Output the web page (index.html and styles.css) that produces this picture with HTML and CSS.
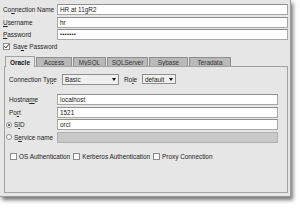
FILE: index.html
```html
<!DOCTYPE html>
<html>
<head>
<meta charset="utf-8">
<link rel="stylesheet" href="styles.css">
</head>
<body>
<div class="dialog">
  <div class="form">
    <label class="lbl"><span>Co<u>n</u>nection Name</span></label><div class="input">HR at 11gR2</div>
    <label class="lbl"><span><u>U</u>sername</span></label><div class="input">hr</div>
    <label class="lbl"><span><u>P</u>assword</span></label><div class="input dots">•••••••</div>
  </div>
  <div class="save">
    <span class="cb checked"><svg viewBox="0 0 7 7" width="7" height="7"><polyline points="1.3,3.4 2.8,5 5.8,1.4" fill="none" stroke="#333" stroke-width="1"/></svg></span>
    <span>Sa<u>v</u>e Password</span>
  </div>
  <div class="tabs">
    <div class="tab sel" style="width:30px">Oracle</div>
    <div class="tab" style="width:36px">Access</div>
    <div class="tab" style="width:33px">MySQL</div>
    <div class="tab" style="width:41px">SQLServer</div>
    <div class="tab" style="width:39px">Sybase</div>
    <div class="tab" style="width:42px">Teradata</div>
  </div>
  <div class="panel">
    <div class="typerow">
      <span class="lbl ct"><span>Connection Ty<u>p</u>e</span></span>
      <div class="select basic"><span>Basic</span><i class="arrow"></i></div>
      <span class="lbl role"><span>Ro<u>l</u>e</span></span>
      <div class="select roles"><span>default</span><i class="arrow"></i></div>
    </div>
    <div class="grid">
      <label class="lbl ind"><span>Hostna<u>m</u>e</span></label><div class="input">localhost</div>
      <label class="lbl ind"><span>Po<u>r</u>t</span></label><div class="input">1521</div>
      <label class="lbl rad"><span class="radio on"></span><span>S<u>I</u>D</span></label><div class="input">orcl</div>
      <label class="lbl rad"><span class="radio"></span><span>S<u>e</u>rvice name</span></label><div class="input disabled"></div>
    </div>
    <div class="auth">
      <span class="opt"><span class="cb"></span><span>OS Authentication</span></span>
      <span class="opt"><span class="cb"></span><span>Kerberos Authentication</span></span>
      <span class="opt"><span class="cb"></span><span>Proxy Connection</span></span>
    </div>
  </div>
</div>
</body>
</html>
```

FILE: styles.css
```css
html, body {
  margin: 0;
  padding: 0;
  background: #ffffff;
}
body {
  width: 300px;
  height: 212px;
  overflow: hidden;
  font-family: "Liberation Sans", Arial, sans-serif;
  font-size: 6.4px;
  color: #222;
}
u { text-decoration: underline; text-underline-offset: 0.5px; }
.dialog {
  box-sizing: border-box;
  width: 291px;
  height: 197px;
  background: #e6e6e6;
  border-right: 1px solid #9a9a9a;
  border-bottom: 1px solid #9a9a9a;
  box-shadow: 2px 3px 4px rgba(0,0,0,0.55);
  padding: 4px 2px 0 3px;
  display: flex;
  flex-direction: column;
}
.form {
  display: grid;
  grid-template-columns: 54px 231px;
  grid-auto-rows: 11px;
  row-gap: 1.5px;
  align-items: center;
}
.lbl {
  display: flex;
  align-items: center;
  white-space: nowrap;
  height: 11px;
}
.input {
  box-sizing: border-box;
  height: 11px;
  background: #fff;
  border: 1px solid #a7a7a7;
  border-top-color: #8f8f8f;
  padding: 0 2px;
  line-height: 9px;
  white-space: nowrap;
  overflow: hidden;
}
.input.dots { font-size: 6px; letter-spacing: 0.2px; font-weight: bold; }
.input.disabled { background: #c9c9c9; border-color: #b0b0b0; }
.save {
  margin-top: 2px;
  height: 8px;
  display: flex;
  align-items: center;
  gap: 3px;
}
.cb {
  box-sizing: border-box;
  width: 7px;
  height: 7px;
  background: #fff;
  border: 1px solid #8d8d8d;
  display: inline-flex;
  flex: none;
}
.cb.checked { border: none; background: #fff; box-shadow: inset 0 0 0 1px #8d8d8d; }
.cb svg { display: block; }
.tabs {
  margin-top: 6px;
  margin-left: 2px;
  display: flex;
  gap: 1px;
  height: 10px;
  align-items: flex-end;
}
.tab {
  box-sizing: border-box;
  height: 9px;
  background: #b9b9b9;
  border: 1px solid #8e8e8e;
  border-bottom: none;
  display: flex;
  align-items: center;
  justify-content: center;
  color: #333;
}
.tab.sel {
  background: #e6e6e6;
  border-color: #a2a2a2;
  font-weight: bold;
  color: #111;
  position: relative;
  margin-bottom: -1px;
  height: 11px;
  z-index: 1;
}
.panel {
  box-sizing: border-box;
  margin-left: 1px;
  width: 284px;
  height: 127px;
  border: 1px solid #a2a2a2;
  padding: 6px 9px 0 1px;
  display: flex;
  flex-direction: column;
}
.typerow {
  display: flex;
  align-items: center;
  height: 12px;
}
.ct { padding-left: 3px; box-sizing: border-box; width: 56px; }
.select {
  box-sizing: border-box;
  height: 11px;
  border: 1px solid #8f8f8f;
  background: #f0f0f0;
  display: flex;
  align-items: center;
  justify-content: space-between;
  padding: 0 2px 0 2px;
}
.select.basic { width: 57px; }
.select.roles { width: 34px; height: 10px; }
.arrow {
  width: 0;
  height: 0;
  border-left: 2.5px solid transparent;
  border-right: 2.5px solid transparent;
  border-top: 3px solid #111;
}
.role { margin-left: 5px; width: 18px; }
.grid {
  margin-top: 9px;
  display: grid;
  grid-template-columns: 51px 221px;
  grid-auto-rows: 11px;
  row-gap: 1.67px;
}
.ind { padding-left: 3px; }
.rad { gap: 2px; }
.radio {
  box-sizing: border-box;
  width: 6px;
  height: 6px;
  border-radius: 50%;
  border: 1px solid #8d8d8d;
  background: #fff;
  position: relative;
  flex: none;
}
.radio.on::after {
  content: "";
  position: absolute;
  left: 1px;
  top: 1px;
  width: 2px;
  height: 2px;
  border-radius: 50%;
  background: #333;
}
.auth {
  margin-top: 10px;
  padding-left: 4px;
  display: flex;
  align-items: center;
  height: 8px;
  gap: 3px;
}
.opt {
  display: flex;
  align-items: center;
  gap: 2px;
  white-space: nowrap;
}
```
